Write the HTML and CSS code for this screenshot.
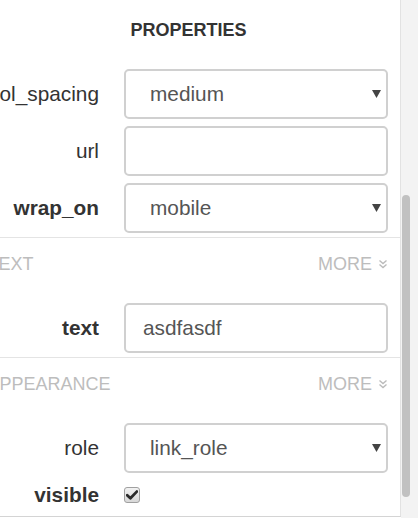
FILE: index.html
```html
<!DOCTYPE html>
<html lang="en">
<head>
<meta charset="utf-8">
<title>Properties</title>
<link rel="stylesheet" href="styles.css">
</head>
<body>
<div class="page">
  <div class="panel">
    <div class="panel-inner">
      <h2 class="title">PROPERTIES</h2>

      <section class="group">
        <div class="fields first">
          <div class="row">
            <span class="label">col_spacing</span>
            <div class="control select"><span>medium</span>
              <svg class="caret" width="9" height="8" viewBox="0 0 9 8"><polygon points="0,0 9,0 4.5,8" fill="#444"/></svg>
            </div>
          </div>
          <div class="row">
            <span class="label">url</span>
            <input class="control input" type="text" value="">
          </div>
          <div class="row">
            <span class="label strong">wrap_on</span>
            <div class="control select"><span>mobile</span>
              <svg class="caret" width="9" height="8" viewBox="0 0 9 8"><polygon points="0,0 9,0 4.5,8" fill="#444"/></svg>
            </div>
          </div>
        </div>
      </section>

      <section class="group">
        <header class="group-head">
          <span>TEXT</span>
          <span class="more">MORE
            <svg class="chev" width="10" height="10" viewBox="0 0 10 10"><polyline points="1.5,1.5 5,4.5 8.5,1.5" fill="none" stroke="#bbb" stroke-width="1.4"/><polyline points="1.5,5.5 5,8.5 8.5,5.5" fill="none" stroke="#bbb" stroke-width="1.4"/></svg>
          </span>
        </header>
        <div class="fields">
          <div class="row">
            <span class="label strong">text</span>
            <input class="control input" type="text" value="asdfasdf">
          </div>
        </div>
      </section>

      <section class="group">
        <header class="group-head">
          <span>APPEARANCE</span>
          <span class="more">MORE
            <svg class="chev" width="10" height="10" viewBox="0 0 10 10"><polyline points="1.5,1.5 5,4.5 8.5,1.5" fill="none" stroke="#bbb" stroke-width="1.4"/><polyline points="1.5,5.5 5,8.5 8.5,5.5" fill="none" stroke="#bbb" stroke-width="1.4"/></svg>
          </span>
        </header>
        <div class="fields">
          <div class="row">
            <span class="label">role</span>
            <div class="control select"><span>link_role</span>
              <svg class="caret" width="9" height="8" viewBox="0 0 9 8"><polygon points="0,0 9,0 4.5,8" fill="#444"/></svg>
            </div>
          </div>
          <div class="row check-row">
            <span class="label strong">visible</span>
            <span class="checkbox">
              <svg width="12" height="10" viewBox="0 0 12 10"><path d="M1.2 5.2 L4.4 8.2 L10.8 1.6" fill="none" stroke="#2b2b2b" stroke-width="2.8" stroke-linecap="round" stroke-linejoin="round"/></svg>
            </span>
          </div>
        </div>
      </section>
    </div>
  </div>
  <div class="scrollbar"><div class="thumb"></div></div>
</div>
</body>
</html>
```

FILE: styles.css
```css
html, body {
  margin: 0;
  padding: 0;
  background: #fff;
}

body {
  font-family: "Liberation Sans", Arial, sans-serif;
  overflow: hidden;
}

.page {
  display: flex;
  height: 518px;
}

.panel {
  flex: none;
  width: 400px;
  height: 516px;
  border-bottom: 1px solid #d4d4d4;
  border-right: 1px solid #e2e2e2;
  overflow: hidden;
}

.panel-inner {
  margin-left: -23px;
  width: 423px;
}

.title {
  margin: 0;
  height: 60px;
  display: flex;
  align-items: center;
  justify-content: center;
  font-size: 18px;
  font-weight: bold;
  color: #333;
}

.group + .group {
  border-top: 1px solid #e4e4e4;
}

.group-head {
  height: 52px;
  padding: 0 12px 0 10.5px;
  display: flex;
  align-items: center;
  justify-content: space-between;
  font-size: 18px;
  color: #bdbdbd;
}

.more {
  display: flex;
  align-items: center;
  gap: 6px;
}

.fields {
  padding: 13px 12px 4px;
  display: flex;
  flex-direction: column;
  gap: 7px;
}

.fields.first {
  padding-top: 9px;
}

.row {
  display: grid;
  grid-template-columns: 110px 1fr;
  column-gap: 25px;
  align-items: center;
}

.label {
  text-align: right;
  font-size: 20.8px;
  color: #333;
  white-space: nowrap;
}

.label.strong {
  font-weight: bold;
}

.control {
  box-sizing: border-box;
  height: 50px;
  width: 100%;
  border: 2px solid #d0d0d0;
  border-radius: 5px;
  background: #fff;
  font-family: "Liberation Sans", Arial, sans-serif;
  font-size: 20.8px;
  color: #555;
}

.select {
  display: flex;
  align-items: center;
  justify-content: space-between;
  padding: 0 5px 0 24px;
}

.caret {
  display: block;
  margin-top: -1px;
}

.input {
  padding: 0 17px;
  outline: none;
  margin: 0;
}

.check-row {
  height: 30px;
}

.checkbox {
  box-sizing: border-box;
  width: 16px;
  height: 16px;
  border: 1px solid #a0a0a0;
  border-radius: 3px;
  background: linear-gradient(#f2f2f2, #d8d8d8);
  display: flex;
  align-items: center;
  justify-content: center;
}

.checkbox svg {
  display: block;
}

.scrollbar {
  flex: none;
  width: 17px;
  box-sizing: border-box;
  padding-top: 195px;
  background: #f3f3f3;
}

.thumb {
  width: 8px;
  height: 302px;
  margin-left: 1px;
  border-radius: 4px;
  background: #c1c1c1;
}
```
